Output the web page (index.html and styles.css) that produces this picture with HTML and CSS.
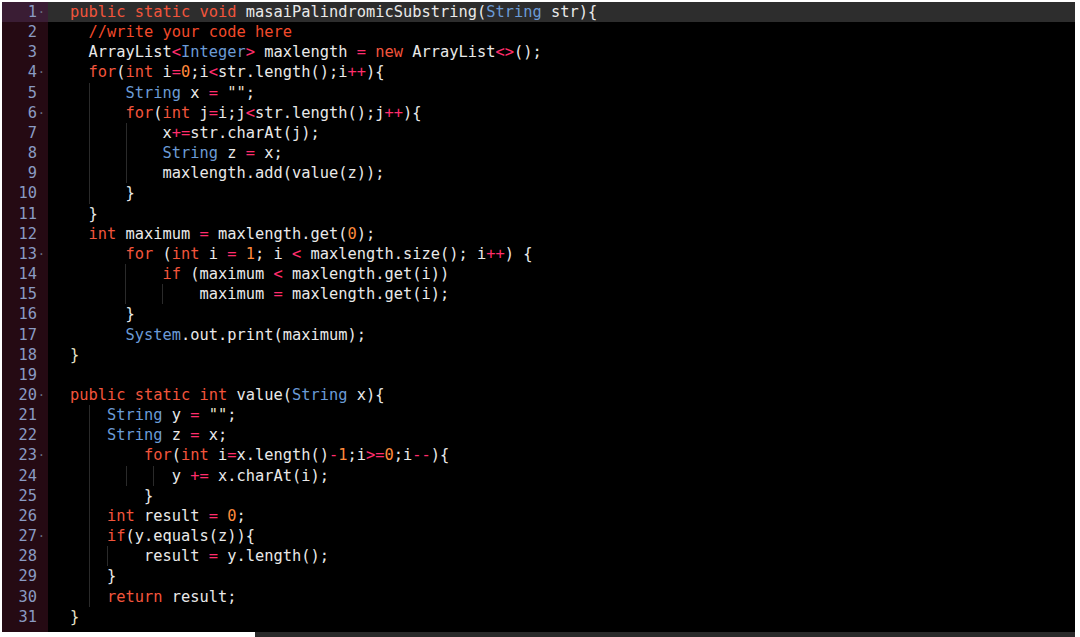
FILE: index.html
```html
<!DOCTYPE html>
<html>
<head>
<meta charset="utf-8">
<link rel="stylesheet" href="styles.css">
</head>
<body>
<div class="frame">
<div class="editor">
<div class="row active"><div class="ln">1<span class="fold">·</span></div><div class="code"><span class="k">public</span> <span class="k">static</span> <span class="k">void</span> masaiPalindromicSubstring(<span class="t">String</span> str){</div></div>
<div class="row"><div class="ln">2</div><div class="code">  <span class="c">//write your code here</span></div></div>
<div class="row"><div class="ln">3</div><div class="code">  ArrayList<span class="o">&lt;</span><span class="t">Integer</span><span class="o">&gt;</span> maxlength <span class="o">=</span> <span class="k">new</span> ArrayList<span class="o">&lt;&gt;</span>();</div></div>
<div class="row"><div class="ln">4<span class="fold">·</span></div><div class="code">  <span class="k">for</span>(<span class="k">int</span> i<span class="o">=</span><span class="n">0</span>;i<span class="o">&lt;</span>str.length();i<span class="o">++</span>){</div></div>
<div class="row"><div class="ln">5</div><div class="code">  <span class="g"></span>    <span class="t">String</span> x <span class="o">=</span> <span class="s">""</span>;</div></div>
<div class="row"><div class="ln">6<span class="fold">·</span></div><div class="code">  <span class="g"></span>    <span class="k">for</span>(<span class="k">int</span> j<span class="o">=</span>i;j<span class="o">&lt;</span>str.length();j<span class="o">++</span>){</div></div>
<div class="row"><div class="ln">7</div><div class="code">  <span class="g"></span>    <span class="g"></span>    x<span class="o">+=</span>str.charAt(j);</div></div>
<div class="row"><div class="ln">8</div><div class="code">  <span class="g"></span>    <span class="g"></span>    <span class="t">String</span> z <span class="o">=</span> x;</div></div>
<div class="row"><div class="ln">9</div><div class="code">  <span class="g"></span>    <span class="g"></span>    maxlength.add(value(z));</div></div>
<div class="row"><div class="ln">10</div><div class="code">  <span class="g"></span>    }</div></div>
<div class="row"><div class="ln">11</div><div class="code">  }</div></div>
<div class="row"><div class="ln">12</div><div class="code">  <span class="k">int</span> maximum <span class="o">=</span> maxlength.get(<span class="n">0</span>);</div></div>
<div class="row"><div class="ln">13<span class="fold">·</span></div><div class="code">      <span class="k">for</span> (<span class="k">int</span> i <span class="o">=</span> <span class="n">1</span>; i <span class="o">&lt;</span> maxlength.size(); i<span class="o">++</span>) {</div></div>
<div class="row"><div class="ln">14</div><div class="code">      <span class="g"></span>    <span class="k">if</span> (maximum <span class="o">&lt;</span> maxlength.get(i))</div></div>
<div class="row"><div class="ln">15</div><div class="code">      <span class="g"></span>    <span class="g"></span>    maximum <span class="o">=</span> maxlength.get(i);</div></div>
<div class="row"><div class="ln">16</div><div class="code">      }</div></div>
<div class="row"><div class="ln">17</div><div class="code">      <span class="t">System</span>.out.print(maximum);</div></div>
<div class="row"><div class="ln">18</div><div class="code"><span class="b">}</span></div></div>
<div class="row"><div class="ln">19</div><div class="code"> </div></div>
<div class="row"><div class="ln">20<span class="fold">·</span></div><div class="code"><span class="k">public</span> <span class="k">static</span> <span class="k">int</span> value(<span class="t">String</span> x){</div></div>
<div class="row"><div class="ln">21</div><div class="code">  <span class="g"></span>  <span class="t">String</span> y <span class="o">=</span> <span class="s">""</span>;</div></div>
<div class="row"><div class="ln">22</div><div class="code">  <span class="g"></span>  <span class="t">String</span> z <span class="o">=</span> x;</div></div>
<div class="row"><div class="ln">23<span class="fold">·</span></div><div class="code">  <span class="g"></span>      <span class="k">for</span>(<span class="k">int</span> i<span class="o">=</span>x.length()<span class="o">-</span><span class="n">1</span>;i<span class="o">&gt;=</span><span class="n">0</span>;i<span class="o">--</span>){</div></div>
<div class="row"><div class="ln">24</div><div class="code">  <span class="g"></span>    <span class="g"></span>   <span class="g"></span>  y <span class="o">+=</span> x.charAt(i);</div></div>
<div class="row"><div class="ln">25</div><div class="code">  <span class="g"></span>      }</div></div>
<div class="row"><div class="ln">26</div><div class="code">  <span class="g"></span>  <span class="k">int</span> result <span class="o">=</span> <span class="n">0</span>;</div></div>
<div class="row"><div class="ln">27<span class="fold">·</span></div><div class="code">  <span class="g"></span>  <span class="k">if</span>(y.equals(z)){</div></div>
<div class="row"><div class="ln">28</div><div class="code">  <span class="g"></span>  <span class="g"></span>    result <span class="o">=</span> y.length();</div></div>
<div class="row"><div class="ln">29</div><div class="code">  <span class="g"></span>  }</div></div>
<div class="row"><div class="ln">30</div><div class="code">  <span class="g"></span>  <span class="k">return</span> result;</div></div>
<div class="row"><div class="ln">31</div><div class="code"><span class="b">}</span></div></div>
<div class="row"><div class="ln"></div><div class="code"> </div></div>
</div>
<div class="bottom"></div>
</div>
</body>
</html>
```
FILE: styles.css
```css
html, body {
  margin: 0;
  padding: 0;
  background: #ffffff;
}
.frame {
  width: 1080px;
  height: 637px;
  padding: 2px 5px 0 2px;
  box-sizing: border-box;
  overflow: hidden;
}
.editor {
  height: 630px;
  overflow: hidden;
  background: #000000;
  font-family: "DejaVu Sans Mono", "Liberation Mono", monospace;
  font-size: 15.36px;
  color: #e9e9e9;
}
.row {
  display: flex;
  height: 20.17px;
  line-height: 20.17px;
}
.ln {
  width: 46px;
  flex: none;
  box-sizing: border-box;
  padding-right: 11px;
  text-align: right;
  background: #250a13;
  color: #8a9bc2;
  position: relative;
}
.fold {
  position: absolute;
  right: 3px;
  top: 0;
  color: #6b6f80;
  font-size: 12px;
}
.code {
  flex: 1;
  padding-left: 22px;
  white-space: pre;
  background: #000000;
}
.active .ln {
  background: #3a1d34;
}
.active .code {
  background: #2d2d2d;
}
.k { color: #f2553c; }
.c { color: #f24a2a; }
.o { color: #ff2d6c; }
.t { color: #6b9bd6; }
.n { color: #ff8a3c; }
.s { color: #e8e2d0; }
.b { color: #e6e2c8; }
.g {
  display: inline-block;
  width: 0;
  height: 20.17px;
  vertical-align: top;
  border-left: 1px solid #2a2a2a;
  margin-right: -1px;
}
.bottom {
  margin-left: 253px;
  height: 5px;
  background: #2a2a2a;
}
```
